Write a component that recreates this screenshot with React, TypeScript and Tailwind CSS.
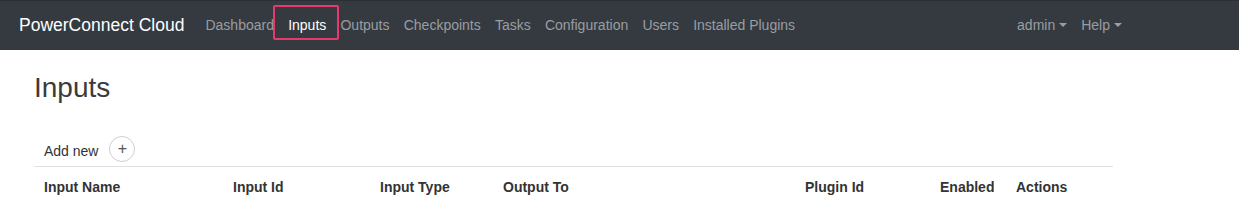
import React from "react";

const links = ["Dashboard", "Inputs", "Outputs", "Checkpoints", "Tasks", "Configuration", "Users", "Installed Plugins"];
const cols = ["Input Name", "Input Id", "Input Type", "Output To", "Plugin Id", "Enabled", "Actions"];

function Caret() {
  return <span className="ml-[4px] inline-block h-0 w-0 border-x-[4px] border-t-[4px] border-x-transparent border-t-current align-[3px]" />;
}

export default function App() {
  return (
    <div className="min-h-[206px] bg-white text-[#333] [font-family:'Liberation_Sans',Arial,sans-serif]">
      <nav className="flex h-[50px] items-center border-t border-[#2b2f33] bg-[#343a40] pl-[19px] pr-[110px]">
        <div className="mr-[14px] text-[17.5px] leading-none text-white">PowerConnect Cloud</div>
        <div className="flex items-center text-[14px]">
          {links.map((l) =>
            l === "Inputs" ? (
              <span key={l} className="relative px-[7.1px] text-white">
                {l}
                <span className="absolute left-[-8px] right-[-6px] top-[-10px] bottom-[-4px] rounded-[2px] border-2 border-[#e8396d]" />
              </span>
            ) : (
              <span key={l} className="px-[7.1px] text-[#9a9da1]">
                {l}
              </span>
            )
          )}
        </div>
        <div className="ml-auto flex items-center text-[14px] text-[#9a9da1]">
          <span className="px-[7px]">admin<Caret /></span>
          <span className="px-[7px]">Help<Caret /></span>
        </div>
      </nav>
      <div className="w-[1113px] pl-[34px]">
        <h1 className="mt-[21px] h-[34px] text-[28px] font-normal leading-[34px] text-[#3b3b3b]">Inputs</h1>
        <div className="mt-[31px] flex h-[26px] items-center pl-[10px] text-[14px]">
          <span className="mt-[4px]">Add new</span>
          <span className="ml-[11px] flex h-[26px] w-[26px] items-center justify-center rounded-full border border-[#cfcfcf] text-[16px] leading-none text-[#555]">+</span>
        </div>
        <div className="mt-[4px] grid grid-cols-[189px_147px_123px_302px_135px_76px_107px] border-t border-[#dee2e6] text-[14px] font-bold text-[#333]">
          {cols.map((c) => (
            <div key={c} className="px-[10px] py-[10px] leading-[21px]">
              {c}
            </div>
          ))}
        </div>
      </div>
    </div>
  );
}
